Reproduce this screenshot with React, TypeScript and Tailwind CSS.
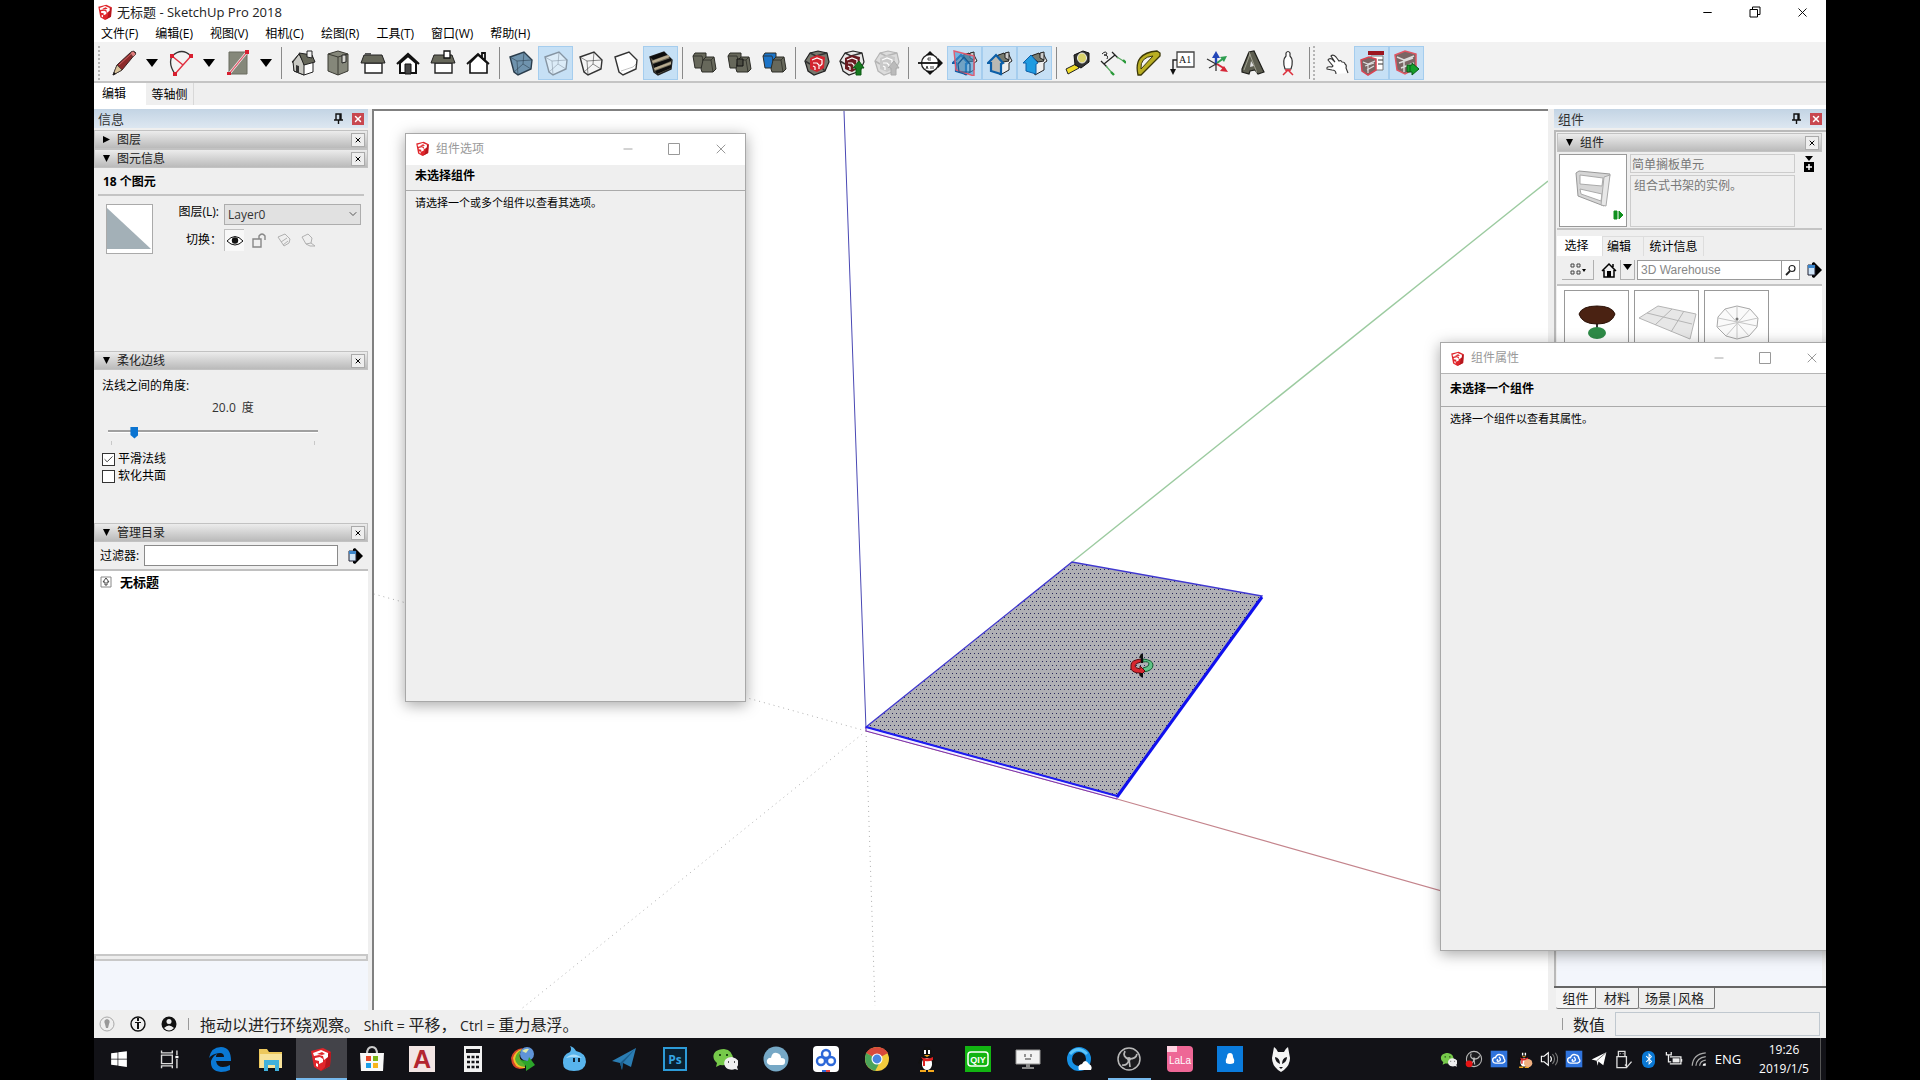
import type { ReactNode } from "react";
import { Check, ChevronDown, Minus, Search, X } from "lucide-react";
import { FaBluetoothB, FaWindows } from "react-icons/fa";

type IconProps = {
  children: ReactNode;
  className?: string;
  box?: string;
};

const Icon = ({ children, className = "h-[26px] w-[26px]", box = "0 0 26 26" }: IconProps) => (
  <svg viewBox={box} className={`shrink-0 ${className}`} fill="none" aria-hidden="true">
    {children}
  </svg>
);

const SketchUpLogo = ({ className = "h-4 w-4" }: { className?: string }) => (
  <Icon box="0 0 24 24" className={className}>
    <path d="m2 4 12-3 8 4-1 14-9 5-7-4z" fill="#e0262b" />
    <path d="m12 24 9-5 1-14-4 3-2 12z" fill="#b5161d" />
    <path d="m4 6 8-3 7 3v4l-4 3-1-4-4-1-5 1z" fill="#fff" />
    <path d="m6 11 5-1 3 2v3l-4 2v-3l-4-1z" fill="#fff" />
    <path d="m7 16 2 1v3l-2-1z" fill="#fff" />
    <path d="m8 7 5-2 3 2-3 1z" fill="#e0262b" />
  </Icon>
);

/* ---------- toolbar drawings ---------- */

const pencil = (
  <Icon>
    <path d="m2 25 4-10L20 2q3-2 5 1L11 20z" fill="#8c2a2a" stroke="#3a2020" />
    <path d="m2 25 4-10 5 5z" fill="#d9c49a" stroke="#333" strokeWidth=".7" />
    <path d="m2 25 1-3 2 2z" fill="#111" />
    <path d="m19 3 3-2 3 3-3 3z" fill="#e07b7b" stroke="#333" strokeWidth=".6" />
    <path d="m8 15 12-11" stroke="#c96060" />
  </Icon>
);

const arc = (
  <Icon>
    <path d="M4 6Q14-3 23 6M4 6q-4 8 3 18" stroke="#333" strokeWidth="1.3" />
    <path d="m4 6 11 9M23 6 7 24" stroke="#e0303f" strokeWidth="1.4" />
    <path d="M2 4h4v4H2zM21 4h4v4h-4zM5 22h4v4H5z" fill="#d81f30" />
  </Icon>
);

const rectangle = (
  <Icon>
    <path d="M4 2h18v22H4z" fill="#85887a" stroke="#6a6c60" />
    <path d="M4 24 22 2" stroke="#fff" strokeWidth="2.6" />
    <path d="M4 24 22 2" stroke="#e06070" strokeWidth="1.2" />
    <path d="M2 22h4v3H2zM20 0h4v4h-4z" fill="#d81f30" />
  </Icon>
);

const houseIso = (
  <Icon>
    <path d="m9 4-7 8 2 1v8l10 4 9-3v-9z" fill="#fff" stroke="#222" />
    <path d="m9 4-6 8 1 9 10 4V13z" fill="#c9c9c3" stroke="#222" />
    <path d="m9 3 13 2 3 7-11 3z" fill="#66675a" stroke="#222" />
    <path d="M17 1h5v7l-5-1z" fill="#f4f4f4" stroke="#222" />
    <path d="M6 15v7l3 1v-7z" fill="#333" />
  </Icon>
);

const houseTop = (
  <Icon>
    <path d="m3 4 10-3 10 3v17l-10 4-10-4z" fill="#85877a" stroke="#3a3a33" />
    <path d="M13 7v18M3 4l10 3 10-3" stroke="#3a3a33" />
    <path d="M17 5h4v7l-4 1z" fill="#d8d8d2" stroke="#222" />
  </Icon>
);

const houseFront = (
  <Icon>
    <path d="M5 13h17v10H5z" fill="#fff" stroke="#222" strokeWidth="1.4" />
    <path d="M4 5h18l3 8H1z" fill="#66675a" stroke="#222" />
    <path d="M5 3h6v2H5z" fill="#555" />
  </Icon>
);

const houseDoor = (
  <Icon>
    <path d="M5 13v10h16V13l-8-7z" fill="#fff" stroke="#111" strokeWidth="2" />
    <path d="m2 14 11-10 11 10" stroke="#111" strokeWidth="2.2" />
    <path d="M10 14h6v10h-6z" fill="#444" stroke="#111" />
  </Icon>
);

const houseBack = (
  <Icon>
    <path d="M5 13h17v10H5z" fill="#fff" stroke="#222" strokeWidth="1.4" />
    <path d="M4 5h18l3 8H1z" fill="#66675a" stroke="#222" />
    <path d="M14 1h6v7h-6z" fill="#fff" stroke="#111" strokeWidth="1.3" />
  </Icon>
);

const houseSide = (
  <Icon>
    <path d="M5 13v10h17V13l-9-8z" fill="#fff" stroke="#111" strokeWidth="1.6" />
    <path d="m2 14 11-10 11 10M17 7V3h3v7" stroke="#111" strokeWidth="1.8" />
  </Icon>
);

type CubeProps = { fill: string; line: string; inner?: boolean; bands?: boolean };

const Cube = ({ fill, line, inner, bands }: CubeProps) => (
  <Icon>
    <path d="m2 7 14-5 8 8-1 9-13 6-4-3z" fill={fill} stroke={line} strokeWidth="1.4" />
    {inner && <path d="m2 7 7 4 15-1M9 11l1 14M16 2l-1 12 8 5M6 22l9-8" stroke={line} strokeWidth=".8" opacity=".7" />}
    {!inner && !bands && <path d="m8 21 12-4 3-3" stroke={line} strokeWidth=".6" opacity=".5" />}
    {bands && (
      <>
        <path d="m2 7 14-5 3 3L5 10zM5 14l18-6v3L6 18zM7 21l16-6v3L9 24z" fill="#0d0d0d" />
        <path d="m4 11 16-6 2 2L5 13zM6 18l17-6v2L7 20z" fill="#b9ac90" />
      </>
    )}
  </Icon>
);

type SolidProps = { left: string; overlap?: boolean };

const Solids = ({ left, overlap }: SolidProps) => (
  <Icon>
    <path d="m2 6 2-3h11v13l-3 2H4z" fill={left} stroke="#2c2c27" />
    <path d="m12 10 3-3h8l2 12-3 3H11l-1-3z" fill="#67685b" stroke="#2c2c27" />
    <path d="M11 10h9l2 12M20 10l3-3M2 6h9l1 4" stroke="#2c2c27" strokeWidth=".8" />
    {overlap && <path d="M11 9h6v7h-6z" fill="#4c4d43" stroke="#111" />}
  </Icon>
);

type WarehouseProps = { tone: string; badge?: string; faded?: boolean };

const Warehouse = ({ tone, badge, faded }: WarehouseProps) => (
  <Icon>
    <path
      d="m6 3 8-2 9 2 2 9-4 9-11 4-6-4-3-10z"
      fill={faded ? "#dcdcdc" : badge ? "#e8e8e8" : "#77786e"}
      stroke={faded ? "#b5b5b5" : "#222"}
      strokeWidth="1.200"
    />
    <path d="m6 3 6 3 11-3M1 11l5 3M21 21l-4-4" stroke={faded ? "#b5b5b5" : "#333"} strokeWidth="1.500" />
    <path d="m6 8 7-3 8 2-1 11-7 4-7-3z" fill={tone} />
    <path d="m8 10 5-2 5 2v4l-2 2M9 13l4 0 2 2v4M9 16l2 1v3" stroke="#fff" strokeWidth="1.200" />
    {badge && <path d="m20 11 5 7h-3v7h-5v-7h-3z" fill={badge} stroke={faded ? "#aaa" : "#0c5a12"} />}
  </Icon>
);

const section = (
  <Icon>
    <circle cx="13" cy="13" r="8.5" stroke="#222" strokeWidth="1.3" fill="#fff" />
    <path d="M1 13h24" stroke="#111" strokeWidth="1.8" />
    <path d="M14 8h-3v2h3M9 19l1-3 1 3m3-3v3m2-3v3" stroke="#444" />
    <path d="M13 1 9 5h8zM13 25l-4-4h8zM26 13l-5-5v10z" fill="#111" />
  </Icon>
);

type SectionHouseProps = { plane?: boolean; solid?: boolean };

const SectionHouse = ({ plane, solid }: SectionHouseProps) => (
  <Icon>
    <path d="m9 6 12-3 4 8-3 2v7l-9 5z" fill="#eee" stroke="#222" />
    <path d="m9 6 8-3 5 8-6 1z" fill="#777a6e" stroke="#222" />
    <path d="m18 3 4-1v8l-4-2z" fill="#ccc" stroke="#222" />
    <path d="M1 13 9 5l7 8-2 1v10L4 21v-8z" fill={solid ? "#1f9be0" : "#b9b9b3"} stroke="#0c5fa8" strokeWidth={solid ? 1 : 2.2} />
    {plane && <path d="m2 1 20 5v20L4 20z" fill="#3f93cf" fillOpacity=".6" stroke="#e25a6f" strokeWidth="1.4" />}
    {plane && <path d="m6 14 6-7 6 7v8H7z" stroke="#1b5a90" strokeWidth="1.2" />}
  </Icon>
);

const tape = (
  <Icon>
    <path d="m1 19 10-5 3 4-11 6z" fill="#f0dc28" stroke="#222" />
    <path d="m9 5 9-4 6 2v9l-8 6-6-3z" fill="#333" stroke="#111" />
    <ellipse cx="17" cy="8" rx="4.500" ry="5" fill="#d9d26a" stroke="#eee" />
  </Icon>
);

const dimension = (
  <Icon>
    <path d="m4 14 11-9M1 11l6 6M12 2l6 6" stroke="#222" strokeWidth="1.3" />
    <path d="m6 16 7 8M17 7l8 5" stroke="#58a860" strokeWidth="1.2" />
    <path d="M2 4q4-4 5 0-1 1-3 1 5 0 3 4" stroke="#222" />
    <path d="m11 22 3 3M23 10l3 3" stroke="#2a9a3a" strokeWidth="2.400" />
  </Icon>
);

const protractor = (
  <Icon>
    <path d="M3 25Q-2 3 22 1l3 2v3L6 25z" fill="#b9ae22" stroke="#3c3808" strokeWidth="1.3" />
    <path d="M6 19Q5 7 18 6z" fill="#f3f3f3" stroke="#3c3808" />
  </Icon>
);

const textTool = (
  <Icon>
    <path d="M7 2h17v15H7z" fill="#fff" stroke="#444" strokeWidth="1.3" />
    <path d="M7 10H3v12" stroke="#222" strokeWidth="1.4" />
    <path d="m3 25-3-6h6z" fill="#111" />
    <text x="9" y="13" fontSize="10" fill="#111" fontFamily="Liberation Serif">A1</text>
  </Icon>
);

const axes = (
  <Icon>
    <path d="M11 15V4" stroke="#2346b8" strokeWidth="2.400" />
    <path d="M11 1 7 8h8z" fill="#2346b8" />
    <path d="m12 13 7-5" stroke="#2e9e50" strokeWidth="2" />
    <path d="m22 6-7 1 4 5z" fill="#2e9e50" />
    <path d="m2 9 9 5M4 18l7-4v7" stroke="#333" strokeWidth="1.3" />
    <path d="m12 14 8 5" stroke="#d62839" strokeWidth="2" />
    <path d="m23 22-8-1 4-5z" fill="#d62839" />
  </Icon>
);

const text3d = (
  <Icon>
    <path d="M2 19 9 2l5-1 9 19 1 2-6 2-3-4-5 1-1 3-7-2z" fill="#5d5e50" stroke="#1e1e1a" strokeWidth="1.2" />
    <path d="m11 11-1 6 4-1z" fill="#ddd" />
    <path d="m9 2 8 21M4 20l6-16" stroke="#b0b0a0" strokeWidth=".8" />
  </Icon>
);

const camera = (
  <Icon>
    <path d="M11 3q2-3 4 0v3q4 4 1 13h-6q-3-9 1-13z" fill="#fff" stroke="#333" strokeWidth="1.2" />
    <path d="m8 25 5-5 5 5M10 20h6" stroke="#dc2f3c" strokeWidth="1.5" />
  </Icon>
);

const hand = (
  <Icon>
    <path d="M12 24q0-4-4-4l-5-1q-1-3 5-2l1-1-5-6q1-2 4-1l3 3-4-6q2-2 5 1l3 4q2-1 3 1 3 0 3 2 2 1 1 4l2 5" fill="#fff" stroke="#333" strokeWidth="1.1" />
  </Icon>
);

const optionsTool = (
  <Icon>
    <path d="M9 1h16v4H9z" fill="#9c1620" />
    <path d="M12 6h12v14H12z" fill="#fff" stroke="#777" />
    <path d="M19 10h5m-5 4h5" stroke="#333" />
    <path d="m2 10 8-3 7 2v11l-8 5-6-4z" fill="#7a6664" stroke="#d94452" strokeWidth="1.5" />
    <path d="m4 12 5 2 7-3M9 14v9M6 16l9-3M8 20l7-4" stroke="#ddd" strokeWidth="1.2" />
  </Icon>
);

const attributesTool = (
  <Icon>
    <path d="m1 5 10-4 11 3v14l-11 6-8-4z" fill="#7a6664" stroke="#e05562" strokeWidth="1.5" />
    <path d="m3 7 7 3 10-4M10 10v12M5 13l14-5M7 18l13-5" stroke="#ddd" strokeWidth="1.400" />
    <path d="M13 15h5v-2l7 6-7 6v-3h-5z" fill="#15a02b" stroke="#0a5a16" />
    <path d="M16 15v7" stroke="#0a5a16" />
  </Icon>
);

type Tool = { name: string; icon: ReactNode; on?: boolean };

const drawTools: Tool[] = [
  { name: "直线", icon: pencil },
  { name: "圆弧", icon: arc },
  { name: "矩形", icon: rectangle },
];

const toolGroups: Tool[][] = [
  [
    { name: "等轴", icon: houseIso },
    { name: "俯视图", icon: houseTop },
    { name: "前视图", icon: houseFront },
    { name: "右视图", icon: houseDoor },
    { name: "后视图", icon: houseBack },
    { name: "左视图", icon: houseSide },
  ],
  [
    { name: "X 光", icon: <Cube fill="#6f93ad" line="#2b3d4c" inner /> },
    { name: "后边线", icon: <Cube fill="#dcecf8" line="#8695a3" inner />, on: true },
    { name: "线框", icon: <Cube fill="#f5f5f5" line="#333" inner /> },
    { name: "消隐", icon: <Cube fill="#fff" line="#333" /> },
    { name: "材质", icon: <Cube fill="#716b5a" line="#222" bands />, on: true },
  ],
  [
    { name: "外壳", icon: <Solids left="#67685b" /> },
    { name: "相交", icon: <Solids left="#67685b" overlap /> },
    { name: "联合", icon: <Solids left="#1c74c8" /> },
  ],
  [
    { name: "获取模型", icon: <Warehouse tone="#d2242e" /> },
    { name: "分享模型", icon: <Warehouse tone="#6a1a20" badge="#177a20" /> },
    { name: "分享组件", icon: <Warehouse tone="#c9c9c9" badge="#bbb" faded /> },
  ],
  [
    { name: "剖切面", icon: section },
    { name: "显示剖切面", icon: <SectionHouse plane />, on: true },
    { name: "显示剖面切割", icon: <SectionHouse />, on: true },
    { name: "显示剖面填充", icon: <SectionHouse solid />, on: true },
  ],
  [
    { name: "卷尺", icon: tape },
    { name: "尺寸", icon: dimension },
    { name: "量角器", icon: protractor },
    { name: "文字", icon: textTool },
    { name: "轴", icon: axes },
    { name: "三维文字", icon: text3d },
    { name: "定位相机", icon: camera },
  ],
];

const componentTools: Tool[] = [
  { name: "互动", icon: hand },
  { name: "组件选项", icon: optionsTool, on: true },
  { name: "组件属性", icon: attributesTool, on: true },
];

const ToolButton = ({ name, icon, on }: Tool) => (
  <button
    aria-label={name}
    className={`flex h-[34px] w-[35px] items-center justify-center border ${
      on ? "border-[#a5cdee] bg-[#c6e0f5]" : "border-transparent"
    }`}
  >
    {icon}
  </button>
);

const Divider = () => (
  <span className="flex h-8 w-2 shrink-0 justify-center">
    <span className="w-px bg-[#8a8a8a]" />
  </span>
);

const Caret = ({ className = "h-2 w-3" }: { className?: string }) => (
  <svg viewBox="0 0 12 8" className={className} aria-hidden="true">
    <path d="M0 0h12L6 8z" fill="#000" />
  </svg>
);

const menus = ["文件(F)", "编辑(E)", "视图(V)", "相机(C)", "绘图(R)", "工具(T)", "窗口(W)", "帮助(H)"];

const TitleBar = () => (
  <header className="bg-white">
    <div className="flex h-6 items-center pl-[3px]">
      <SketchUpLogo />
      <h1 className="ml-1 flex-1 text-[13px] leading-5 text-[#222]">无标题 - SketchUp Pro 2018</h1>
      <button aria-label="最小化" className="flex w-[47px] justify-center">
        <Minus size={13} strokeWidth={2} />
      </button>
      <button aria-label="还原" className="flex w-[47px] justify-center">
        <svg viewBox="0 0 12 12" className="h-3 w-3" fill="none" stroke="#000" aria-hidden="true">
          <path d="M1 3.500h7.500V11H1zM3.500 3.500V1H11v7.500H8.500" />
        </svg>
      </button>
      <button aria-label="关闭" className="flex w-12 justify-center">
        <X size={15} strokeWidth={1.500} />
      </button>
    </div>
    <nav className="flex h-[18px] items-center gap-[17px] pt-[2px] pl-[7px]">
      {menus.map((menu) => (
        <button key={menu} className="text-[12px] leading-4 text-black">
          {menu}
        </button>
      ))}
    </nav>
  </header>
);

const Toolbar = () => (
  <div className="flex h-[41px] items-center border-b-2 border-[#c4c4c4] bg-[#f2f2f2] pt-[3px]">
    <span className="ml-1 h-[34px] w-2 border-l-2 border-dotted border-[#b5b5b5]" />
    {drawTools.map((tool) => (
      <div key={tool.name} className="flex items-center">
        <ToolButton {...tool} />
        <button aria-label={`${tool.name}菜单`} className="flex w-[22px] justify-center">
          <Caret />
        </button>
      </div>
    ))}
    {toolGroups.map((group) => (
      <div key={group[0].name} className="flex items-center">
        <Divider />
        {group.map((tool) => (
          <ToolButton key={tool.name} {...tool} />
        ))}
      </div>
    ))}
    <Divider />
    <span className="h-[34px] w-[6px] border-l-2 border-dotted border-[#b5b5b5]" />
    {componentTools.map((tool) => (
      <ToolButton key={tool.name} {...tool} />
    ))}
  </div>
);

const SceneTabs = () => (
  <div className="flex h-[26px] border-b-4 border-white bg-[#efefef] text-[12px] leading-5">
    <button className="w-[52px] bg-white pr-3">编辑</button>
    <button className="w-12 border-r border-[#d8d8d8] pt-[2px]">等轴侧</button>
  </div>
);

/* ---------- docked trays ---------- */

const PushPin = () => (
  <Icon box="0 0 10 12" className="h-3 w-[10px]">
    <path d="M2 7V1h5v6M6 1v6M0 7h9M4.500 7v4" stroke="#111" strokeWidth="1.400" />
  </Icon>
);

const TrayHeader = ({ title }: { title: string }) => (
  <div className="flex h-[19px] shrink-0 items-center bg-linear-to-b from-[#c3d4e4] to-[#dde7f1] pr-1 pl-1">
    <h2 className="flex-1 text-[13px] leading-4 text-[#333]">{title}</h2>
    <button aria-label="固定" className="mr-2">
      <PushPin />
    </button>
    <button aria-label={`关闭${title}`} className="flex h-3 w-3 items-center justify-center bg-[#c8474f] text-white">
      <X size={10} strokeWidth={3.500} />
    </button>
  </div>
);

const SectionHeader = ({ title, closed }: { title: string; closed?: boolean }) => (
  <div className="flex h-[19px] shrink-0 items-center border border-[#c2c2c2] bg-linear-to-b from-[#ececec] to-[#bababa] pr-[2px] pl-2">
    <button className="flex flex-1 items-center gap-[7px] text-[12px] leading-4 text-[#222]">
      <svg viewBox="0 0 8 8" className="h-[7px] w-[7px]" aria-hidden="true">
        <path d={closed ? "M0 0v8l8-4z" : "M0 0h8L4 8z"} fill="#000" />
      </svg>
      {title}
    </button>
    <button aria-label={`关闭${title}`} className="flex h-[14px] w-[14px] items-center justify-center border border-[#aaa] bg-[#eee]">
      <X size={8} strokeWidth={3} />
    </button>
  </div>
);

const DetailsArrow = () => (
  <Icon box="0 0 16 16" className="h-4 w-4">
    <path d="M6 1v14l2 1 8-8-8-8z" fill="#000" />
    <path d="M2 3h7v10H2z" fill="#cfe4f7" stroke="#223" />
    <path d="M2 3h7v3H2z" fill="#3b86cc" />
  </Icon>
);

const EntityInfo = () => (
  <section className="h-[183px] shrink-0 px-1 pt-1">
    <h3 className="h-6 border-b-2 border-[#c4c4c4] pl-[5px] text-[12px] leading-5 font-bold text-black">18 个图元</h3>
    <div className="mt-2 flex pl-2">
      <svg viewBox="0 0 47 50" className="h-[50px] w-[47px] border border-[#aaa] bg-white" aria-hidden="true">
        <path d="M0 3v43h46z" fill="#a3b0b7" />
      </svg>
      <div className="flex flex-1 flex-col gap-1 pr-[3px]">
        <div className="flex items-start">
          <label htmlFor="layer" className="w-[71px] shrink-0 pr-[5px] text-right text-[12px] leading-4">
            图层(L):
          </label>
          <div className="relative flex-1">
            <select id="layer" className="block h-[21px] w-full appearance-none border border-[#adadad] bg-[#e1e1e1] pl-[3px] text-[12px] text-[#333]">
              <option>Layer0</option>
            </select>
            <ChevronDown size={12} className="pointer-events-none absolute top-1 right-[2px] text-[#555]" />
          </div>
        </div>
        <div className="flex items-center">
          <span className="w-[71px] pl-[33px] text-[12px] leading-4">切换：</span>
          <button aria-label="可见" className="flex h-[22px] w-5 items-center justify-center border-t border-l border-[#c0c0c0] bg-[#f8f8f8]">
            <Icon box="0 0 16 10" className="h-[10px] w-4">
              <path d="M0 5q8-9 16 0-8 8-16 0z" fill="#fff" stroke="#111" />
              <circle cx="8" cy="4.500" r="3.200" fill="#111" />
            </Icon>
          </button>
          <button aria-label="锁定" className="flex w-[30px] justify-center">
            <Icon box="0 0 14 15" className="h-[15px] w-[14px]">
              <path d="M1 6h8v8H1zM7 6V3q3-4 6 0v4" stroke="#888" strokeWidth="1.4" />
            </Icon>
          </button>
          <button aria-label="接收阴影" className="flex w-5 justify-center">
            <Icon box="0 0 14 14" className="h-[14px] w-[14px]">
              <path d="m1 4 7-3 5 5-1 4-5 3zM4 9l6-4m-4 7 5-4" stroke="#b0b0b0" />
            </Icon>
          </button>
          <button aria-label="投射阴影" className="flex w-7 justify-center">
            <Icon box="0 0 14 14" className="h-[14px] w-[14px]">
              <path d="m1 4 6-3 4 4-1 5-5 1zM5 11l4 2h5l-4-3" stroke="#b0b0b0" />
            </Icon>
          </button>
        </div>
      </div>
    </div>
  </section>
);

const SoftenEdges = () => (
  <section className="h-[153px] shrink-0 px-2 pt-2 text-[12px] text-black">
    <label htmlFor="angle" className="block leading-4">
      法线之间的角度:
    </label>
    <div className="mt-1 flex gap-[6px] pl-[110px] leading-5 text-[#333]">
      <output htmlFor="angle">20.0</output>
      <span>度</span>
    </div>
    <input
      id="angle"
      type="range"
      min={0}
      max={180}
      defaultValue={20}
      className="mt-[7px] ml-[6px] block h-3 w-[210px] appearance-none bg-transparent [&::-webkit-slider-runnable-track]:h-[3px] [&::-webkit-slider-runnable-track]:border-t-2 [&::-webkit-slider-runnable-track]:border-b [&::-webkit-slider-runnable-track]:border-t-[#a0a0a0] [&::-webkit-slider-runnable-track]:border-b-white [&::-webkit-slider-thumb]:-mt-[5px] [&::-webkit-slider-thumb]:h-3 [&::-webkit-slider-thumb]:w-2 [&::-webkit-slider-thumb]:appearance-none [&::-webkit-slider-thumb]:bg-[#0b74d1] [&::-webkit-slider-thumb]:[clip-path:polygon(0_0,100%_0,100%_70%,50%_100%,0_70%)]"
    />
    <div className="mx-[9px] mt-1 flex h-1 w-[204px] border-x border-[#c8c8c8]" />
    <div className="mt-[6px] flex flex-col gap-px">
      {["平滑法线", "软化共面"].map((label, index) => (
        <label key={label} className="flex items-center gap-[3px] leading-4">
          <span className="relative flex h-[13px] w-[13px]">
            <input type="checkbox" defaultChecked={index === 0} className="peer h-full w-full appearance-none border border-[#333] bg-white" />
            <Check size={11} className="pointer-events-none absolute top-px left-px hidden text-[#333] peer-checked:block" />
          </span>
          {label}
        </label>
      ))}
    </div>
  </section>
);

const Outliner = () => (
  <section className="flex flex-1 flex-col">
    <div className="flex h-[29px] items-center border-b-2 border-[#c0c0c0] pl-[6px] text-[12px]">
      <label htmlFor="filter" className="w-11 shrink-0 leading-4">
        过滤器:
      </label>
      <input id="filter" className="h-[21px] min-w-0 flex-1 border border-[#8a8a8a] bg-white px-1" />
      <button aria-label="详细信息" className="mr-[5px] ml-[9px]">
        <DetailsArrow />
      </button>
    </div>
    <ul className="flex-1 bg-white pt-[3px] pl-[6px]">
      <li className="flex items-center gap-2 text-[13px] leading-4 font-bold text-black">
        <Icon box="0 0 12 12" className="h-3 w-3">
          <path d="M1 1h10v10H1z" stroke="#888" />
          <path d="m6 2 3 4H7v3H5V6H3z" stroke="#444" />
        </Icon>
        无标题
      </li>
    </ul>
    <div className="h-[7px] border-2 border-[#c8c8c8] bg-[#eee]" />
    <div className="h-[49px] bg-[#f3f6fc]" />
  </section>
);

const InfoTray = () => (
  <aside className="flex w-[278px] shrink-0 flex-col bg-[#efefef] pr-1">
    <TrayHeader title="信息" />
    <div className="mt-[2px] flex flex-1 flex-col">
      <SectionHeader title="图层" closed />
      <SectionHeader title="图元信息" />
      <EntityInfo />
      <SectionHeader title="柔化边线" />
      <SoftenEdges />
      <SectionHeader title="管理目录" />
      <Outliner />
    </div>
  </aside>
);

const Viewport = () => (
  <main className="relative min-w-0 flex-1 border-t-2 border-l-2 border-[#808080] bg-white">
    <svg viewBox="374 111 1174 899" preserveAspectRatio="xMinYMin slice" className="absolute inset-0 h-full w-full" fill="none" aria-label="模型视图">
      <defs>
        <pattern id="selected" width="4" height="8" patternUnits="userSpaceOnUse">
          <path d="M0 0h4v8H0z" fill="#b0b0b5" />
          <path d="M0 1h1v1H0zM2 5h1v1H2z" fill="#26265a" />
        </pattern>
      </defs>
      <path d="M866 731 374 594M866 731 520 1010M866 731l9 275" stroke="#b0b0b0" strokeDasharray="1 4" />
      <path d="m844 111 22 618" stroke="#4a48b4" />
      <path d="m1072 562 476-381" stroke="#9ccba0" strokeWidth="1.400" />
      <path d="m866 731 251 68 431 122" stroke="#c4848c" strokeWidth="1.200" />
      <path d="m866 727 206-165 190 34-145 200z" fill="url(#selected)" stroke="#4038d0" strokeWidth="1.300" />
      <path d="M866 727v4l251 68v-3z" fill="#f4f0ff" stroke="#7a30b0" />
      <path d="m866 727 251 69" stroke="#1c1cf0" strokeWidth="2" />
      <path d="m1117 797 145-200" stroke="#1010ee" strokeWidth="3" />
      <path d="M1143 659q10 1 10 6 0 6-10 7v-4q6-1 6-4t-6-2z" fill="#5fc487" stroke="#125c30" />
      <path d="M1141 659q-10 1-10 6v4q2 4 9 4v3l5-5-5-5v3q-5-1-5-3 0-3 6-4z" fill="#d8262f" stroke="#5a0c10" />
      <path d="M1142 654v9m0 10v4m0-23-2 4m2 19-2-4" stroke="#111" strokeWidth="2" />
    </svg>
  </main>
);

const warehouseItems = [
  {
    name: "圆桌",
    icon: (
      <Icon box="0 0 64 64" className="h-16 w-16">
        <path d="M32 32v12" stroke="#333" strokeWidth="2" />
        <ellipse cx="32" cy="42" rx="9" ry="6" fill="#2e8b47" />
        <path d="M14 23q3-8 18-8t18 8q-3 10-18 10t-18-10z" fill="#4a2212" stroke="#2b1208" />
      </Icon>
    ),
  },
  {
    name: "网格",
    icon: (
      <Icon box="0 0 64 64" className="h-16 w-16">
        <path d="m4 27 19-12 38 8-6 25z" fill="#e7e7e7" stroke="#b5b5b5" />
        <path d="m20 34 17-16M36 41l13-21M12 22l45 11" stroke="#b5b5b5" />
      </Icon>
    ),
  },
  {
    name: "圆形",
    icon: (
      <Icon box="0 0 64 64" className="h-16 w-16">
        <path d="m32 15 13 3 8 9-1 9-8 9-12 3-11-3-9-9 1-10 7-8z" fill="#fafafa" stroke="#a8a8a8" />
        <path d="m32 15v33M13 27l39 8M20 18l24 27M45 18 21 45M12 36l41-9" stroke="#c6c6c6" />
        <circle cx="32" cy="28" r="1.500" fill="#777" />
      </Icon>
    ),
  },
];

const ComponentsTray = () => (
  <aside className="flex w-[278px] shrink-0 flex-col bg-[#efefef] pl-[6px]">
    <TrayHeader title="组件" />
    <div className="mt-[2px] flex flex-1 flex-col border-t-2 border-l-2 border-[#b9b9b9] pt-px pr-1 pl-px">
      <SectionHeader title="组件" />
      <div className="flex h-[78px] shrink-0 items-start gap-[3px] border-b-2 border-[#c4c4c4] pt-[2px] pl-[2px]">
        <div className="flex h-[73px] w-[68px] shrink-0 border border-[#999] bg-white">
          <Icon box="0 0 66 71" className="h-[71px] w-[66px]">
            <path d="m16 18 3-2 31 3-6 32-26-10z" fill="#d6d6d6" stroke="#999" />
            <path d="m20 20 23 3-1 8-22-2zM20 34l22 5-1 7-20-7z" fill="#fff" stroke="#aaa" />
            <path d="m44 22 6-2-4 31-5-1z" fill="#e8e8e8" stroke="#aaa" />
            <path d="M54 56h3v8h-3zM59 56l4 4-4 4z" fill="#10901f" stroke="#10901f" />
          </Icon>
        </div>
        <div className="flex min-w-0 flex-1 flex-col text-[12px] text-[#777]">
          <input aria-label="名称" defaultValue="简单搁板单元" className="h-[19px] w-full border border-[#ccc] pl-px" />
          <textarea aria-label="说明" defaultValue="组合式书架的实例。" className="mt-[2px] h-[52px] w-full resize-none border border-[#ccc] pt-[2px] pl-[3px] leading-4" />
        </div>
        <button aria-label="显示辅助窗格" className="mr-1 ml-[2px] flex w-[18px] justify-center pt-[2px]">
          <Icon box="0 0 12 16" className="h-4 w-3">
            <path d="M2 0h8L6 5zM1 6h10v10H1z" fill="#000" />
            <path d="M6 8v6M3 11h6" stroke="#fff" strokeWidth="1.500" />
          </Icon>
        </button>
      </div>
      <div className="mt-[6px] flex h-5 shrink-0 text-[12px] leading-5 text-black">
        <button className="w-[45px] bg-white pr-[6px]">选择</button>
        <button className="w-[42px] border border-b-0 border-[#ddd] pr-[8px]">编辑</button>
        <button className="w-[60px] border border-l-0 border-b-0 border-[#ddd]">统计信息</button>
      </div>
      <div className="flex h-[30px] shrink-0 items-center border-b-2 border-[#c4c4c4] pb-px pl-[5px]">
        <button aria-label="视图选项" className="flex h-5 w-8 items-center justify-center border-r border-b border-[#b0b0b0]">
          <Icon box="0 0 16 12" className="h-3 w-4">
            <path d="M1 1h3v3H1zM7 1h3v3H7zM1 8h3v3H1zM7 8h3v3H7z" stroke="#444" />
            <path d="M12 6h4l-2 3z" fill="#000" />
          </Icon>
        </button>
        <button aria-label="在模型中" className="ml-1 flex h-5 w-[22px] items-center justify-center">
          <Icon box="0 0 16 16" className="h-4 w-4">
            <path d="M1 9 8 2l7 7M3 8v7h10V8M12 5V2" stroke="#000" strokeWidth="1.500" />
            <path d="M6 9h4v6H6z" fill="#000" />
          </Icon>
        </button>
        <button aria-label="导航" className="flex h-5 w-[15px] items-start justify-center border-x border-b border-[#b0b0b0] pt-1">
          <Caret className="h-[6px] w-[9px]" />
        </button>
        <input aria-label="搜索" placeholder="3D Warehouse" className="ml-[2px] h-5 min-w-0 flex-1 border border-[#999] bg-white pl-[3px] font-['Liberation_Sans',sans-serif] text-[12px] placeholder:text-[#888]" />
        <button aria-label="查找" className="flex h-5 w-[18px] items-center justify-center border border-l-0 border-[#999] bg-white">
          <Icon box="0 0 12 12" className="h-3 w-3">
            <circle cx="7" cy="4.500" r="3" stroke="#222" strokeWidth="1.200" />
            <path d="m5 7-4 4" stroke="#222" strokeWidth="1.800" />
          </Icon>
        </button>
        <button aria-label="详细信息" className="ml-[6px]">
          <DetailsArrow />
        </button>
      </div>
      <div className="flex flex-1 gap-[5px] bg-white pt-1 pl-[7px]">
        {warehouseItems.map((item) => (
          <button key={item.name} aria-label={item.name} className="flex h-[66px] w-[65px] justify-center border border-[#999] bg-white">
            {item.icon}
          </button>
        ))}
      </div>
      <div className="h-[52px] bg-[#f3f6fc]" />
    </div>
    <div className="flex h-6 items-start border-t-2 border-[#666] pl-[2px] text-[13px] leading-5 text-[#222]">
      <button className="h-[21px] w-10 rounded-b-xs border-r border-b border-[#777] bg-[#f5f5f5]">组件</button>
      <button className="h-[21px] w-[43px] rounded-b-xs border-r border-b border-[#777]">材料</button>
      <button className="h-[21px] w-[76px] rounded-b-xs border-r border-b border-[#777] pr-1">场景|风格</button>
    </div>
  </aside>
);

/* ---------- floating dialogs ---------- */

type DialogProps = { title: string; heading: string; body: string; place: string; tall?: boolean };

const Dialog = ({ title, heading, body, place, tall }: DialogProps) => (
  <section className={`absolute border border-[#a8a8a8] bg-[#efefef] shadow-[0_3px_14px_rgba(0,0,0,0.35)] ${place}`}>
    <header className={`flex h-[31px] items-center bg-white pl-[9px] text-[#999] ${tall ? "border-b border-[#b5b5b5]" : "pb-[2px]"}`}>
      <SketchUpLogo className="h-[15px] w-[15px]" />
      <h2 className="ml-[6px] flex-1 text-[12px] leading-4">{title}</h2>
      <button aria-label="最小化" className="flex w-[46px] justify-center">
        <Minus size={14} strokeWidth={1.500} />
      </button>
      <button aria-label="最大化" className="flex w-[46px] justify-center">
        <svg viewBox="0 0 12 12" className="h-3 w-3" fill="none" stroke="currentColor" aria-hidden="true">
          <path d="M.5.5h11v11H.5z" />
        </svg>
      </button>
      <button aria-label="关闭" className="flex w-12 justify-center">
        <X size={16} strokeWidth={1.500} />
      </button>
    </header>
    <h3 className={`border-b border-[#aaa] pl-[9px] text-[12px] leading-4 font-bold text-black ${tall ? "pt-[7px] pb-[9px]" : "pt-[3px] pb-[6px]"}`}>
      {heading}
    </h3>
    <p className="pt-1 pl-[9px] text-[11px] leading-4 text-black">{body}</p>
  </section>
);

const StatusBar = () => (
  <footer className="flex h-7 items-center bg-[#efefef] pl-[5px] text-[16px] leading-6 text-[#222]">
    <div className="flex gap-[15px]">
      <Icon box="0 0 16 16" className="h-4 w-4">
        <circle cx="8" cy="8" r="7" stroke="#aaa" />
        <path d="M8 3q-4 1-2 5l1 4h2l1-4q2-4-2-5z" fill="#999" />
      </Icon>
      <Icon box="0 0 16 16" className="h-4 w-4">
        <circle cx="8" cy="8" r="7" stroke="#111" strokeWidth="1.400" />
        <path d="M7 2h2v3H7zM5 6h6v1H9v6H7V7H5z" fill="#111" />
      </Icon>
      <Icon box="0 0 16 16" className="h-4 w-4">
        <circle cx="8" cy="8" r="7.500" fill="#111" />
        <circle cx="8" cy="5.500" r="2.500" fill="#eee" />
        <path d="M3 12q5-5 10 0-5 5-10 0z" fill="#eee" />
      </Icon>
    </div>
    <span className="ml-[11px] h-3 w-px bg-[#999]" />
    <p className="ml-[11px] flex-1 pt-[2px]">
      拖动以进行环绕观察。<span className="text-[14px]"> Shift = </span>平移，<span className="text-[14px]"> Ctrl = </span>重力悬浮。
    </p>
    <span className="h-3 w-px bg-[#999]" />
    <label htmlFor="measure" className="mr-[10px] ml-[10px] pt-[2px]">
      数值
    </label>
    <input id="measure" className="mr-[6px] h-6 w-[205px] border border-[#c0c8cf] bg-[#efefef] text-[13px]" />
  </footer>
);

/* ---------- taskbar ---------- */

const wechat = (
  <>
    <path d="M12 3C0 3-1 13 5 17l-1 4 4-2q10 1 13-5 0-10-9-11z" fill="#76c94a" />
    <path d="M20 11c-9 0-10 9-4 12 3 1 5 1 7 0l3 1-1-3q5-7-5-10z" fill="#efefef" />
    <path d="M7 8h2v2H7zM14 8h2v2h-2z" fill="#1f4a12" />
    <path d="M16 15h1v2h-1zM22 15h1v2h-1z" fill="#555" />
  </>
);

const obs = (
  <>
    <circle cx="13" cy="13" r="11" fill="#1b1b1e" stroke="#b8b8b8" strokeWidth="1.500" />
    <path d="M13 13q-7-2-4-8M13 13q7 0 8-5M13 13q-1 7-7 6M13 13l1 8" stroke="#b8b8b8" strokeWidth="1.700" />
    <circle cx="13" cy="13" r="2" fill="#b8b8b8" />
  </>
);

const penguin = (
  <>
    <path d="M8 9q0-8 5-8t5 8l4 8-3 1q0 7-6 7t-6-7l-3-1z" fill="#111" />
    <path d="M13 12q6 1 5 7-1 5-5 5t-5-5q-1-6 5-7z" fill="#fff" />
    <path d="M10 4h2v4h-2zM14 4h2v4h-2z" fill="#fff" />
    <path d="M10 9h6l-3 2zM6 24h6v2H6zM14 24h6v2h-6z" fill="#f5a81c" />
    <path d="M7 11q6 3 12 0v3q-4 2-8 1v5H9v-6z" fill="#dd2222" />
  </>
);

const cloudSync = (
  <>
    <path d="M1 1h24v24H1z" fill="#2f73dc" />
    <path d="M8 19q-5-1-4-6 2-3 4-2 2-6 8-4 4 1 4 5 4 5-2 7zM13 10q4 5 0 6t-2-3" stroke="#fff" strokeWidth="2" />
  </>
);

const apps: { name: string; icon: ReactNode }[] = [
  { name: "开始", icon: <FaWindows size={18} color="#fff" /> },
  {
    name: "任务视图",
    icon: (
      <Icon className="h-5 w-5">
        <path d="M2 8h14v11H2zM2 2v3h14V2M2 25v-3h14v3M22 2v6m0 5v12" stroke="#ddd" strokeWidth="1.800" />
        <path d="M20 9h4v3h-4z" fill="#fff" />
      </Icon>
    ),
  },
  {
    name: "Edge",
    icon: (
      <Icon>
        <path d="M2 12Q4 1 14 1t10 14H9q1 6 7 6 4 0 7-2v5q-4 2-9 2Q3 25 4 15q2-6 8-8-7 1-10 5zm7-1h8q0-4-4-4t-4 4z" fill="#0a78d4" />
      </Icon>
    ),
  },
  {
    name: "文件资源管理器",
    icon: (
      <Icon>
        <path d="M1 3h8l2 3h13v16H1z" fill="#edc85c" />
        <path d="M2 8h22v14H2z" fill="#f8e39a" />
        <path d="M6 25V14h15v11h-4v-6h-7v6z" fill="#41b1dc" />
      </Icon>
    ),
  },
  { name: "SketchUp", icon: <SketchUpLogo className="h-6 w-6" /> },
  {
    name: "Microsoft Store",
    icon: (
      <Icon>
        <path d="M8 8q0-7 5-7t5 7" stroke="#ccc" strokeWidth="2" />
        <path d="M1 7h24l-1 18H2z" fill="#f8f8f8" />
        <path d="M7 10h5v5H7z" fill="#e8482a" />
        <path d="M14 10h5v5h-5z" fill="#7cb518" />
        <path d="M7 17h5v5H7z" fill="#1a9fe8" />
        <path d="M14 17h5v5h-5z" fill="#f8b41a" />
      </Icon>
    ),
  },
  {
    name: "AutoCAD",
    icon: (
      <Icon>
        <path d="M0 0h26v26H0z" fill="#f3e6e4" />
        <text x="13" y="22" textAnchor="middle" fontSize="25" fontWeight="700" fill="#b3262f" fontFamily="Liberation Sans">A</text>
      </Icon>
    ),
  },
  {
    name: "计算器",
    icon: (
      <Icon>
        <path d="M4 0h18v26H4z" fill="#f2f2f2" />
        <path d="M6 3h14v4H6z" fill="#16161a" />
        <path d="M7 11h12M7 16h12M7 21h12" stroke="#16161a" strokeWidth="2.500" strokeDasharray="3 1.500" />
      </Icon>
    ),
  },
  {
    name: "IDM",
    icon: (
      <Icon>
        <path d="M1 12Q3 3 13 2 7 7 9 12l6 10Q2 26 1 12z" fill="#d8452a" />
        <path d="M3 12q2-7 9-9-4 6-2 10l5 6v3Q4 23 3 12z" fill="#f0c028" />
        <path d="M5 13q1-6 6-9-3 6-1 9l5 6v2Q6 20 5 13z" fill="#58b030" />
        <circle cx="17" cy="8" r="7" fill="#5f94d8" />
        <path d="M12 5q4-3 7-2l-3 4z" fill="#dfe9a8" />
        <path d="m10 14 8 1 1-4 6 8-9 6v-5z" fill="#2ca52a" />
      </Icon>
    ),
  },
  {
    name: "旺旺",
    icon: (
      <Icon>
        <path d="M9 0q4 1 6 5 10 2 10 11-1 9-12 9T2 17q-1-8 7-11 2-3 0-6z" fill="#58b4ec" />
        <path d="M5 12q7-7 16 0-8-2-16 0z" fill="#a8dcf8" />
        <path d="M13 12v4m5-4v4" stroke="#123" strokeWidth="2" />
      </Icon>
    ),
  },
  {
    name: "纸飞机",
    icon: (
      <Icon>
        <path d="m1 15 24-13-5 19-8-4-1 7-2-7z" fill="#2b7db3" />
        <path d="M25 2 9 17l2 7 1-7z" fill="#1b5c8a" />
      </Icon>
    ),
  },
  {
    name: "Photoshop",
    icon: (
      <Icon>
        <path d="M2 2h22v22H2z" fill="#0a2030" stroke="#2d9bd8" strokeWidth="2" />
        <text x="13" y="18" textAnchor="middle" fontSize="12" fontWeight="700" fill="#35a5e2" fontFamily="Open Sans">Ps</text>
      </Icon>
    ),
  },
  { name: "微信", icon: <Icon>{wechat}</Icon> },
  {
    name: "云盘",
    icon: (
      <Icon>
        <circle cx="13" cy="13" r="12.500" fill="#76a8c6" />
        <path d="M7 19q-4-1-3-5 2-3 4-2 1-6 6-5 4 1 4 5 5 0 4 4 0 3-3 3z" fill="#fff" />
      </Icon>
    ),
  },
  {
    name: "百度网盘",
    icon: (
      <Icon>
        <rect width="26" height="26" rx="4" fill="#fff" />
        <g stroke="#2d68d8" strokeWidth="2.400">
          <circle cx="13" cy="8" r="4" />
          <circle cx="8" cy="15" r="4" />
          <circle cx="18" cy="15" r="4" />
        </g>
        <path d="M9 25h4" stroke="#2d68d8" strokeWidth="2" />
        <path d="M13 25h4" stroke="#e24040" strokeWidth="2" />
      </Icon>
    ),
  },
  {
    name: "Chrome",
    icon: (
      <Icon>
        <circle cx="13" cy="13" r="12" fill="#f3cb3c" />
        <path d="M13 13 2 7Q6 1 13 1t11 6z" fill="#d84a3c" />
        <path d="M13 13 2 7q-4 14 9 18l5-9z" fill="#4ba45a" />
        <circle cx="13" cy="13" r="5.500" fill="#fff" />
        <circle cx="13" cy="13" r="4.400" fill="#4a85e0" />
      </Icon>
    ),
  },
  { name: "QQ", icon: <Icon>{penguin}</Icon> },
  {
    name: "爱奇艺",
    icon: (
      <Icon>
        <path d="M0 0h26v26H0z" fill="#12b412" />
        <rect x="3" y="6" width="20" height="14" rx="3" stroke="#fff" strokeWidth="1.500" />
        <text x="13" y="17" textAnchor="middle" fontSize="9" fontWeight="700" fill="#fff" fontFamily="Liberation Sans">QIY</text>
      </Icon>
    ),
  },
  {
    name: "屏幕",
    icon: (
      <Icon>
        <path d="M1 4h24v14H1z" fill="#f2f2f2" stroke="#999" />
        <path d="M11 18h4v3h4v2H7v-2h4z" fill="#888" />
        <path d="M10 8v3m6-3v3m-6 2h6" stroke="#333" />
      </Icon>
    ),
  },
  {
    name: "QQ 浏览器",
    icon: (
      <Icon>
        <circle cx="13" cy="13" r="9.500" stroke="#1690e4" strokeWidth="5" />
        <path d="M4 8q8-9 17 0" stroke="#5cc4f8" strokeWidth="3" />
        <path d="M13 24q-2-5 3-6 3-6 7 0 4 2 2 6z" fill="#fff" />
      </Icon>
    ),
  },
  { name: "OBS", icon: <Icon>{obs}</Icon> },
  {
    name: "LaLa",
    icon: (
      <Icon>
        <rect width="26" height="26" rx="4" fill="#ee6796" />
        <path d="M0 0h10v6H0z" fill="#ffd3e2" />
        <text x="13" y="18" textAnchor="middle" fontSize="10" fill="#fff" fontFamily="Liberation Sans">LaLa</text>
      </Icon>
    ),
  },
  {
    name: "电脑管家",
    icon: (
      <Icon>
        <path d="M0 0h26v26H0z" fill="#0a7bdc" />
        <path d="M13 7q3 0 3 4 2 3 1 6-4 2-8 0-1-3 1-6 0-4 3-4z" fill="#fff" />
      </Icon>
    ),
  },
  {
    name: "foobar2000",
    icon: (
      <Icon>
        <path d="M6 1q3 2 4 5h6q1-3 4-5l2 11q0 7-6 12l-3 2-3-2q-6-5-6-12z" fill="#f4f4f4" />
        <path d="M7 11q5 1 5 7-5-2-5-7zM19 11q-5 1-5 7 5-2 5-7zM11 21h4l-2 2z" fill="#16161a" />
      </Icon>
    ),
  },
];

const trayIcons: { name: string; icon: ReactNode }[] = [
  { name: "微信", icon: <Icon className="h-[17px] w-[17px]">{wechat}</Icon> },
  {
    name: "OBS",
    icon: (
      <Icon className="h-[18px] w-[18px]">
        {obs}
        <circle cx="6" cy="20" r="5" fill="#e81414" />
      </Icon>
    ),
  },
  { name: "云同步", icon: <Icon className="h-[18px] w-[18px]">{cloudSync}</Icon> },
  {
    name: "QQ",
    icon: (
      <Icon className="h-[18px] w-[18px]">
        {penguin}
        <circle cx="19" cy="19" r="6" fill="#f0b080" />
      </Icon>
    ),
  },
  {
    name: "音量",
    icon: (
      <Icon className="h-[18px] w-[18px]">
        <path d="M2 9h4l6-5v18l-6-5H2zM15 9q3 4 0 8" stroke="#fff" strokeWidth="1.600" />
        <path d="M18 6q6 7 0 14M22 4q7 9 0 18" stroke="#777" strokeWidth="1.600" />
      </Icon>
    ),
  },
  { name: "备份", icon: <Icon className="h-[18px] w-[18px]">{cloudSync}</Icon> },
  {
    name: "发送",
    icon: (
      <Icon className="h-4 w-4">
        <path d="m1 14 24-12-5 21-8-6-1 7-2-8z" fill="#fff" />
        <path d="M24 3 9 16" stroke="#222" />
      </Icon>
    ),
  },
  {
    name: "USB",
    icon: (
      <Icon className="h-[19px] w-[19px]">
        <path d="M6 9V2h9v7M4 9h13v15H4zM8 5h1m3 0h1M15 20l3 3 6-7" stroke="#ddd" strokeWidth="1.800" />
      </Icon>
    ),
  },
  {
    name: "蓝牙",
    icon: (
      <span className="flex h-[17px] w-[13px] items-center justify-center rounded-md bg-[#0a78d4]">
        <FaBluetoothB size={12} color="#fff" />
      </span>
    ),
  },
  {
    name: "电池",
    icon: (
      <Icon className="h-[18px] w-[18px]">
        <path d="M7 10h16v10H7M24 13v4M2 3v4h7V3M5 7v10h4" stroke="#eee" strokeWidth="1.800" />
        <path d="M11 12h10v6H11z" fill="#eee" />
      </Icon>
    ),
  },
  {
    name: "网络",
    icon: (
      <Icon className="h-4 w-4">
        <path d="M2 24Q3 5 24 3M8 24Q9 11 24 9M14 24q1-8 10-9" stroke="#aaa" strokeWidth="2" />
        <path d="M19 24q0-4 5-4v4z" fill="#fff" />
      </Icon>
    ),
  },
];

const openApps = ["SketchUp", "OBS"];

const Taskbar = () => (
  <nav aria-label="任务栏" className="flex h-[42px] items-center justify-between bg-[#121217] text-white">
    <div className="grid h-full w-[1212px] shrink-0 grid-cols-24">
      {apps.map((app) => (
        <button
          key={app.name}
          aria-label={app.name}
          className={`relative flex items-center justify-center ${app.name === "SketchUp" ? "bg-[#434349]" : ""}`}
        >
          {app.icon}
          {openApps.includes(app.name) && (
            <span className={`absolute bottom-0 h-[2px] bg-[#76b9ed] ${app.name === "SketchUp" ? "inset-x-0" : "inset-x-1"}`} />
          )}
        </button>
      ))}
    </div>
    <div className="flex h-full items-center">
      {trayIcons.map((tray) => (
        <button key={tray.name} aria-label={tray.name} className="flex w-[25px] justify-center">
          {tray.icon}
        </button>
      ))}
      <button className="ml-[3px] w-7 text-[13px] leading-4">ENG</button>
      <time className="ml-3 w-[60px] text-center text-[12px] leading-[19px]">
        19:26
        <br />
        2019/1/5
      </time>
      <span className="ml-[6px] h-full w-[6px] border-l border-[#555]" />
    </div>
  </nav>
);

const App = () => {
  return (
    <div className="min-h-screen bg-black px-[94px] font-['Open_Sans','Noto_Sans_CJK_SC',sans-serif]">
      <div className="flex min-h-screen flex-col overflow-hidden bg-white">
        <TitleBar />
        <Toolbar />
        <SceneTabs />
        <div className="relative flex flex-1 overflow-hidden">
          <InfoTray />
          <Viewport />
          <ComponentsTray />
          <Dialog
            title="组件选项"
            heading="未选择组件"
            body="请选择一个或多个组件以查看其选项。"
            place="top-6 left-[311px] h-[569px] w-[341px]"
          />
          <Dialog
            title="组件属性"
            heading="未选择一个组件"
            body="选择一个组件以查看其属性。"
            place="top-[233px] -right-[11px] h-[609px] w-[397px]"
            tall
          />
        </div>
        <StatusBar />
        <Taskbar />
      </div>
    </div>
  );
};

export default App;
